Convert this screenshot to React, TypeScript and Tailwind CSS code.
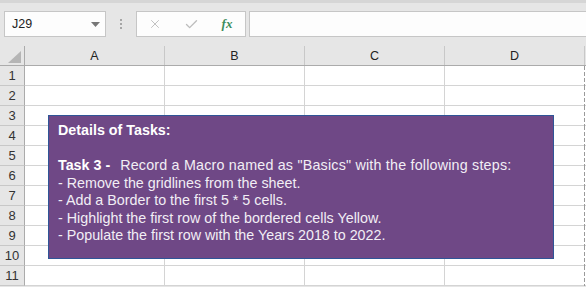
import { X, Check } from "lucide-react";

const COLS = ["A", "B", "C", "D"];
const ROWS = [1, 2, 3, 4, 5, 6, 7, 8, 9, 10, 11];

export default function App() {
  return (
    <div className="relative w-[586px] h-[287px] overflow-hidden bg-[#e6e6e6] font-['Liberation_Sans',Arial,sans-serif]">
      {/* formula bar */}
      <div className="h-[46px] border-t-[3px] border-[#d6d6d6] flex items-start pt-[8px] pl-[4px]">
        <div className="w-[102px] h-[26px] bg-[#fdfdfd] border border-[#c6c6c6] flex items-center pl-[7px] pr-[5px] text-[12.5px] text-[#222]">
          <span className="flex-1">J29</span>
          <svg width="9" height="5" viewBox="0 0 9 5">
            <path d="M0 0 L9 0 L4.5 5 Z" fill="#777" />
          </svg>
        </div>
        <div className="w-[30px] h-[26px] flex flex-col items-center justify-center gap-[2px]">
          <span className="w-[2px] h-[2px] bg-[#a6a6a6]" />
          <span className="w-[2px] h-[2px] bg-[#a6a6a6]" />
          <span className="w-[2px] h-[2px] bg-[#a6a6a6]" />
        </div>
        <div className="w-[110px] h-[26px] bg-[#fdfdfd] border border-[#c6c6c6] flex items-center">
          <div className="w-[36px] flex justify-center">
            <X size={14} strokeWidth={1.6} color="#bdbdbd" />
          </div>
          <div className="w-[36px] flex justify-center">
            <Check size={15} strokeWidth={2.2} color="#bdbdbd" />
          </div>
          <div className="w-[36px] flex justify-center text-[13px] italic font-bold text-[#3d8d5e] font-['Liberation_Serif',serif]">
            fx
          </div>
        </div>
        <div className="ml-[3px] flex-1 h-[26px] bg-[#fdfdfd] border border-[#c6c6c6] border-r-0" />
      </div>

      {/* column header */}
      <div className="flex h-[20px] border-b border-[#ababab]">
        <div className="w-[25px] border-r border-[#ababab] flex items-end justify-end pr-[3px] pb-[2px]">
          <svg width="13" height="12" viewBox="0 0 13 12">
            <path d="M13 0 L13 12 L0 12 Z" fill="#b5b5b5" />
          </svg>
        </div>
        {COLS.map((c) => (
          <div
            key={c}
            className="w-[140px] border-r border-[#c8c8c8] flex items-center justify-center text-[12.5px] text-[#222] pt-[1px]"
          >
            {c}
          </div>
        ))}
      </div>

      {/* rows */}
      {ROWS.map((r) => (
        <div key={r} className="flex h-[20px]">
          <div className="w-[25px] border-r border-b border-r-[#ababab] border-b-[#c8c8c8] flex items-center justify-center text-[13px] text-[#333]">
            {r}
          </div>
          <div className="w-[140px] bg-white border-r border-b border-[#d4d4d4]" />
          <div className="w-[140px] bg-white border-r border-b border-[#d4d4d4]" />
          <div className="w-[140px] bg-white border-r border-b border-[#d4d4d4]" />
          <div className="w-[139px] bg-white border-b border-[#d4d4d4]" />
          <div className="w-[1px] bg-[repeating-linear-gradient(to_bottom,#9a9a9a_0,#9a9a9a_4px,#ffffff_4px,#ffffff_6px)]" />
          <div className="flex-1 bg-white border-b border-[#d4d4d4]" />
        </div>
      ))}

      {/* text box shape */}
      <div className="absolute left-[48px] top-[115px] w-[506px] h-[144px] bg-[#6f4886] border border-[#2f5597] pl-[9px] pt-[6px] text-[14.3px] leading-[17.5px] text-[#f2eef5]">
        <div className="font-bold text-white">Details of Tasks:</div>
        <div>&nbsp;</div>
        <div>
          <span className="font-bold text-white">Task 3 - </span>
          <span className="ml-[6px] tracking-[0.2px]">Record a Macro named as "Basics" with the following steps:</span>
        </div>
        <div>- Remove the gridlines from the sheet.</div>
        <div>- Add a Border to the first 5 * 5 cells.</div>
        <div>- Highlight the first row of the bordered cells Yellow.</div>
        <div>- Populate the first row with the Years 2018 to 2022.</div>
      </div>
    </div>
  );
}
